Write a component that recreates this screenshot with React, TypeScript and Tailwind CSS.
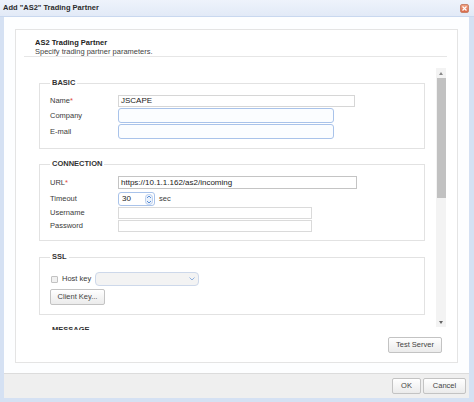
import type { ReactNode } from "react";

const btn =
  "border border-[#c3c3c3] rounded-[2px] bg-gradient-to-b from-[#ffffff] to-[#ebebeb] text-[#444] text-[7.5px] leading-none flex items-center justify-center";

function Row({ label, required, children, h, mt = "" }: { label: string; required?: boolean; children: ReactNode; h: string; mt?: string }) {
  return (
    <div className={`flex items-center ${h} ${mt}`}>
      <div className="w-[68px] text-[#3a3a3a]">
        {label}
        {required && <span className="text-[#e0463c]">*</span>}
      </div>
      {children}
    </div>
  );
}

function Legend({ children }: { children: ReactNode }) {
  return <legend className="px-[2px] h-[10px] leading-[10px] font-bold text-[#333]">{children}</legend>;
}

export default function App() {
  return (
    <div className="w-[474px] h-[402px] bg-[#d5e1f3] flex flex-col font-['Liberation_Sans',Arial,sans-serif] text-[7.5px] leading-[10px] overflow-hidden">
      {/* title bar */}
      <div className="h-[17px] shrink-0 flex items-center justify-between pl-[3px] pr-[5px] bg-gradient-to-b from-[#eef3fb] to-[#e2eaf7] border-b border-[#c9d8ef]">
        <span className="font-bold text-[#2b2b2b]">Add "AS2" Trading Partner</span>
        <span className="w-[9px] h-[9px] rounded-[2px] bg-gradient-to-b from-[#f0a080] to-[#d9694a] border border-[#c9826a] flex items-center justify-center">
          <svg width="5" height="5" viewBox="0 0 5 5">
            <path d="M0.5 0.5L4.5 4.5M4.5 0.5L0.5 4.5" stroke="#fff" strokeWidth="1.2" />
          </svg>
        </span>
      </div>

      {/* body */}
      <div className="flex-1 ml-[4px] mr-[5px] mb-[4px] bg-[#fdfeff] flex flex-col">
        <div className="mt-[12px] ml-[11px] w-[443px] h-[334px] border border-[#e4e4e4] bg-white flex flex-col">
          {/* header */}
          <div className="ml-[8px] mr-[10px] pl-[11px] pt-[8px] border-b border-[#e6e6e6] leading-[9px]">
            <div className="font-bold text-[#222]">AS2 Trading Partner</div>
            <div className="text-[#444]">Specify trading partner parameters.</div>
          </div>

          {/* scroll area */}
          <div className="ml-[8px] mt-[10px] w-[422px] h-[263px] flex overflow-hidden">
            <div className="flex-1 overflow-hidden pl-[15px] pr-[11px]">
              <fieldset className="mt-[11px] border border-[#e2e2e2] pl-[10px] pt-[7px] pb-[9px]">
                <Legend>BASIC</Legend>
                <Row label="Name" required h="h-[12px]">
                  <div className="w-[237px] h-[12px] border border-[#d6d6d6] bg-white pl-[2px] text-[8px] leading-[10px] text-[#222]">JSCAPE</div>
                </Row>
                <Row label="Company" h="h-[15px]" mt="mt-[1px]">
                  <div className="w-[216px] h-[15px] border border-[#a9c3ea] rounded-[3px] bg-[#fbfdff]" />
                </Row>
                <Row label="E-mail" h="h-[15px]" mt="mt-[1px]">
                  <div className="w-[216px] h-[15px] border border-[#a9c3ea] rounded-[3px] bg-[#fbfdff]" />
                </Row>
              </fieldset>

              <fieldset className="mt-[10px] border border-[#e2e2e2] pl-[10px] pt-[7px] pb-[8px]">
                <Legend>CONNECTION</Legend>
                <Row label="URL" required h="h-[13px]">
                  <div className="w-[239px] h-[13px] border border-[#c4c4c4] bg-white pl-[2px] text-[8px] leading-[11px] text-[#222]">https://10.1.1.162/as2/incoming</div>
                </Row>
                <Row label="Timeout" h="h-[14px]" mt="mt-[3px]">
                  <div className="w-[37px] h-[14px] border border-[#a9c3ea] rounded-[3px] bg-white flex items-center justify-between pl-[3px] pr-[1px] text-[8px] text-[#222]">
                    <span>30</span>
                    <svg width="8" height="11" viewBox="0 0 8 11">
                      <rect x="0.5" y="0.5" width="7" height="10" rx="3" fill="#eaf1fb" stroke="#bcd0ee" />
                      <path d="M2 4L4 2L6 4M2 7L4 9L6 7" stroke="#5b8fd6" strokeWidth="1" fill="none" />
                    </svg>
                  </div>
                  <span className="ml-[4px] text-[#3a3a3a]">sec</span>
                </Row>
                <Row label="Username" h="h-[12px]" mt="mt-[1px]">
                  <div className="w-[194px] h-[12px] border border-[#dadada] bg-white" />
                </Row>
                <Row label="Password" h="h-[12px]" mt="mt-[1px]">
                  <div className="w-[194px] h-[12px] border border-[#dadada] bg-white" />
                </Row>
              </fieldset>

              <fieldset className="mt-[11px] border border-[#e2e2e2] pl-[10px] pt-[10px] pb-[9px]">
                <Legend>SSL</Legend>
                <div className="flex items-center h-[14px]">
                  <span className="ml-[1px] w-[7px] h-[7px] border border-[#c2c2c2] bg-[#f1f1f1] rounded-[1px]" />
                  <span className="ml-[4px] text-[#3a3a3a]">Host key</span>
                  <div className="ml-[4px] w-[104px] h-[14px] border border-[#cdd8ea] rounded-[4px] bg-[#f3f3f3] flex items-center justify-end pr-[3px]">
                    <svg width="6" height="4" viewBox="0 0 6 4">
                      <path d="M0.5 0.5L3 3L5.5 0.5" stroke="#8fb0de" strokeWidth="1" fill="none" />
                    </svg>
                  </div>
                </div>
                <div className={`${btn} mt-[3px] w-[55px] h-[16px]`}>Client Key...</div>
              </fieldset>

              <fieldset className="mt-[10px] border border-[#e2e2e2] pl-[10px] h-[40px]">
                <Legend>MESSAGE</Legend>
              </fieldset>
            </div>

            {/* scrollbar */}
            <div className="w-[10px] mt-[1px] mb-[3px] bg-[#f3f3f3] flex flex-col items-center">
              <div className="h-[10px] flex items-center justify-center">
                <svg width="4" height="3" viewBox="0 0 4 3">
                  <path d="M0 3L2 0L4 3Z" fill="#888" />
                </svg>
              </div>
              <div className="w-[9px] h-[120px] bg-[#c1c1c1]" />
              <div className="flex-1" />
              <div className="h-[10px] flex items-center justify-center">
                <svg width="4" height="3" viewBox="0 0 4 3">
                  <path d="M0 0L2 3L4 0Z" fill="#666" />
                </svg>
              </div>
            </div>
          </div>

          <div className="flex justify-end mr-[15px] mt-[7px]">
            <div className={`${btn} w-[54px] h-[16px]`}>Test Server</div>
          </div>
        </div>

        {/* footer */}
        <div className="mt-[10px] flex-1 bg-[#efefef] border-t border-[#dcdcdc] flex justify-end items-start pt-[4px] pr-[3px] gap-[2px]">
          <div className={`${btn} w-[29px] h-[16px]`}>OK</div>
          <div className={`${btn} w-[43px] h-[16px]`}>Cancel</div>
        </div>
      </div>
    </div>
  );
}
